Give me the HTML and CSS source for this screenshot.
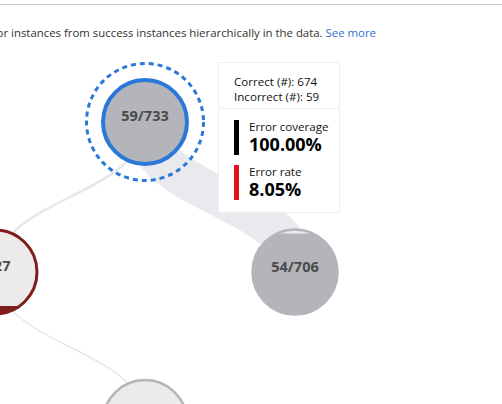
FILE: index.html
```html
<!DOCTYPE html>
<html lang="en">
<head>
    <meta charset="UTF-8">
    <title>Error Analysis Tree</title>
    <link rel="stylesheet" href="styles.css">
</head>
<body>
    <div class="topbar"></div>

    <div class="intro">
        <p class="intro-text">The tree visualization uses the mutual information insights to discover which features best separate error instances from success instances hierarchically in the data. <a href="#">See more</a></p>
    </div>

    <!-- Tree canvas -->
    <div class="canvas">
        <svg class="tree" viewBox="0 45 502 359" width="502" height="359">
            <defs>
                <clipPath id="clipRight"><circle cx="295" cy="272" r="43"/></clipPath>
                <clipPath id="clipLeft"><circle cx="-5" cy="272" r="42"/></clipPath>
            </defs>

            <!-- links -->
            <path class="link link-thick" d="M145,122 C145,197 295,197 295,272"/>
            <path class="link" d="M145,122 C145,197 -5,197 -5,272"/>
            <path class="link link-thin" d="M-5,272 C-5,347 145,347 145,422"/>

            <!-- root -->
            <circle class="selected-ring" cx="145" cy="122" r="58.5"/>
            <circle class="node node-root" cx="145" cy="122" r="42"/>
            <text class="node-label" x="145" y="117">59/733</text>

            <!-- right child -->
            <circle class="node node-light node-gray-border" cx="295" cy="272" r="42.5"/>
            <rect class="fill-gray" x="250" y="233.5" width="90" height="90" clip-path="url(#clipRight)"/>
            <text class="node-label" x="295" y="268">54/706</text>

            <!-- left child -->
            <circle class="node node-light" cx="-5" cy="272" r="42"/>
            <rect class="fill-red" x="-50" y="306" width="90" height="40" clip-path="url(#clipLeft)"/>
            <circle class="node-red-border" cx="-5" cy="272" r="42"/>
            <text class="node-label" x="-5" y="267">5/27</text>

            <!-- grandchild -->
            <circle class="node node-light node-gray-border" cx="145" cy="422" r="42"/>
        </svg>

        <div class="tooltip">
            <div class="tooltip-counts">
                <div>Correct (#): 674</div>
                <div>Incorrect (#): 59</div>
            </div>
            <div class="tooltip-metrics">
                <div class="metric">
                    <span class="metric-bar bar-black"></span>
                    <div>
                        <div class="metric-label">Error coverage</div>
                        <div class="metric-value">100.00%</div>
                    </div>
                </div>
                <div class="metric">
                    <span class="metric-bar bar-red"></span>
                    <div>
                        <div class="metric-label">Error rate</div>
                        <div class="metric-value">8.05%</div>
                    </div>
                </div>
            </div>
        </div>
    </div>
</body>
</html>
```

FILE: styles.css
```css
* {
    margin: 0;
    padding: 0;
    box-sizing: border-box;
}

body {
    width: 502px;
    height: 404px;
    overflow: hidden;
    background: #fff;
    color: #323130;
    font-family: "Segoe UI", "Open Sans", sans-serif;
}

.topbar {
    height: 5px;
    border-bottom: 1px solid #c8c8c8;
}

/* Intro line */
.intro {
    width: 376px;
    height: 40px;
    display: flex;
    justify-content: flex-end;
    padding-top: 20px;
}

.intro-text {
    flex: none;
    white-space: nowrap;
    font-size: 11.4px;
    line-height: 16px;
}

.intro-text a {
    color: #2f6fd5;
    text-decoration: none;
}

/* Tree */
.canvas {
    position: relative;
    height: 359px;
}

.tree {
    display: block;
}

.link {
    fill: none;
    stroke: #e6e7ea;
    stroke-width: 2.5;
}

.link-thick {
    stroke: #e9eaed;
    stroke-width: 40;
}

.link-thin {
    stroke-width: 1.5;
}

.selected-ring {
    fill: none;
    stroke: #2b78d8;
    stroke-width: 3;
    stroke-dasharray: 5 4;
}

.node-root {
    fill: #b4b5bb;
    stroke: #2b78d8;
    stroke-width: 4;
}

.node-light {
    fill: #ecebe9;
}

.node-gray-border {
    stroke: #b4b5bb;
    stroke-width: 2.5;
}

.fill-gray {
    fill: #b4b5bb;
}

.fill-red {
    fill: #7f1d1d;
}

.node-red-border {
    fill: none;
    stroke: #7f1d1d;
    stroke-width: 3;
}

.node-label {
    font-family: "Segoe UI", "Open Sans", sans-serif;
    font-size: 14.5px;
    font-weight: 700;
    fill: #4b4b4b;
    text-anchor: middle;
    dominant-baseline: middle;
}

/* Tooltip */
.tooltip {
    position: absolute;
    left: 218px;
    top: 17px;
    width: 122px;
    height: 151px;
    background: #fff;
    border: 1px solid #edeff3;
    font-size: 11.6px;
    color: #111;
    white-space: nowrap;
}

.tooltip-counts {
    padding: 11px 15px 4px;
    line-height: 15px;
    border-bottom: 1px solid #edeff3;
}

.tooltip-metrics {
    display: flex;
    flex-direction: column;
    gap: 10px;
    padding: 11px 15px 0;
}

.metric {
    display: flex;
    gap: 10px;
}

.metric-bar {
    width: 5px;
    flex: none;
}

.bar-black {
    background: #000;
}

.bar-red {
    background: #e3101e;
}

.metric-label {
    line-height: 14px;
}

.metric-value {
    font-size: 18px;
    font-weight: 700;
    line-height: 21px;
    color: #000;
}
```
